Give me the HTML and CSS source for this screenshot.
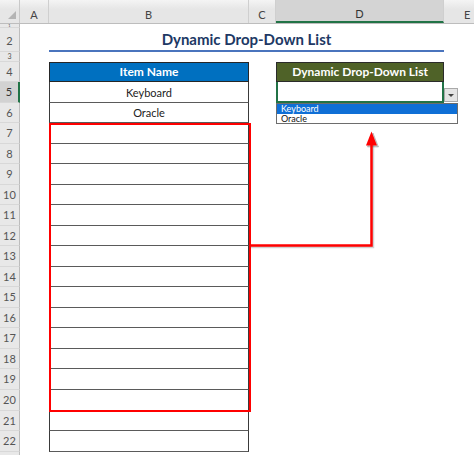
FILE: index.html
```html
<!DOCTYPE html>
<html>
<head>
<meta charset="utf-8">
<link rel="stylesheet" href="styles.css">
</head>
<body>
<div class="sheet">
  <div class="row hdr">
    <div class="corner"><span class="tri"></span></div>
    <div class="ch a">A</div>
    <div class="ch b">B</div>
    <div class="ch c">C</div>
    <div class="ch d sel">D</div>
    <div class="ch e">E</div>
  </div>
  <div class="row r1"><div class="rh">1</div></div>
  <div class="row r2"><div class="rh">2</div><div class="a"></div><div class="title">Dynamic Drop-Down List</div></div>
  <div class="row r3"><div class="rh">3</div></div>
  <div class="row"><div class="rh">4</div><div class="a"></div><div class="b th">Item Name</div><div class="c"></div><div class="d dh">Dynamic Drop-Down List</div></div>
  <div class="row"><div class="rh sel">5</div><div class="a"></div><div class="b tb">Keyboard</div><div class="c"></div><div class="d active"></div></div>
  <div class="row"><div class="rh">6</div><div class="a"></div><div class="b tb">Oracle</div></div>
  <div class="row"><div class="rh">7</div><div class="a"></div><div class="b tb"></div></div>
  <div class="row"><div class="rh">8</div><div class="a"></div><div class="b tb"></div></div>
  <div class="row"><div class="rh">9</div><div class="a"></div><div class="b tb"></div></div>
  <div class="row"><div class="rh">10</div><div class="a"></div><div class="b tb"></div></div>
  <div class="row"><div class="rh">11</div><div class="a"></div><div class="b tb"></div></div>
  <div class="row"><div class="rh">12</div><div class="a"></div><div class="b tb"></div></div>
  <div class="row"><div class="rh">13</div><div class="a"></div><div class="b tb"></div></div>
  <div class="row"><div class="rh">14</div><div class="a"></div><div class="b tb"></div></div>
  <div class="row"><div class="rh">15</div><div class="a"></div><div class="b tb"></div></div>
  <div class="row"><div class="rh">16</div><div class="a"></div><div class="b tb"></div></div>
  <div class="row"><div class="rh">17</div><div class="a"></div><div class="b tb"></div></div>
  <div class="row"><div class="rh">18</div><div class="a"></div><div class="b tb"></div></div>
  <div class="row"><div class="rh">19</div><div class="a"></div><div class="b tb"></div></div>
  <div class="row"><div class="rh">20</div><div class="a"></div><div class="b tb"></div></div>
  <div class="row"><div class="rh">21</div><div class="a"></div><div class="b tb"></div></div>
  <div class="row"><div class="rh">22</div><div class="a"></div><div class="b tb"></div></div>
  <div class="row"><div class="rh"></div></div>

  <div class="redbox"></div>
  <svg class="arrow" width="474" height="455" viewBox="0 0 474 455">
    <g class="shadow">
      <path d="M251 247 H373 V145" fill="none" stroke-width="2.5"/>
      <polygon points="373,133 367.5,147 378.5,147"/>
    </g>
    <path d="M250 245.5 H371.5 V143" fill="none" stroke="#ff0000" stroke-width="2.5"/>
    <polygon points="371.5,131.5 366,145.5 377,145.5" fill="#ff0000"/>
  </svg>

  <div class="ddbtn"><span class="caret"></span></div>
  <div class="ddlist">
    <div class="opt on">Keyboard</div>
    <div class="opt">Oracle</div>
  </div>
</div>
</body>
</html>
```
FILE: styles.css
```css
* { box-sizing: border-box; margin: 0; padding: 0; }
body { margin: 0; background: #ffffff; font-family: "Lato", "Liberation Sans", sans-serif; }

.sheet { position: relative; width: 474px; height: 455px; overflow: hidden; background: #fff; }

.row { display: flex; height: 20.54px; }
.row.hdr { height: 24px; }
.row.r1 { height: 4px; }
.row.r2 { height: 24px; }
.row.r3 { height: 9.5px; }

.a { width: 29px; flex: none; }
.b { width: 200px; flex: none; }
.c { width: 27px; flex: none; }
.d { width: 168px; flex: none; }
.e { flex: 1; }

/* column headers */
.hdr { background: linear-gradient(#f4f4f4, #e6e6e6 40%); border-bottom: 1px solid #bdbdbd; }
.corner { width: 20px; flex: none; position: relative; border-right: 1px solid #c9c9c9; }
.tri { position: absolute; right: 3px; bottom: 4px; width: 0; height: 0;
  border-left: 8px solid transparent; border-bottom: 8px solid #b4b4b4; }
.ch { display: flex; align-items: center; justify-content: center; padding-top: 6px;
  font-size: 11px; color: #444; border-right: 1px solid #cfcfcf; }
.ch.sel { background: #d4d4d4; border-bottom: 2px solid #217346; color: #333; }
.ch.e { border-right: none; justify-content: flex-start; padding-left: 20px; }

/* row headers */
.rh { width: 20px; flex: none; background: #e8e8e8; border-right: 1px solid #bdbdbd;
  border-bottom: 1px solid #d8d8d8; font-size: 11px; color: #555; text-align: center;
  line-height: 20px; overflow: hidden; }
.r1 .rh { font-size: 4px; line-height: 3px; }
.r2 .rh { line-height: 22px; padding-top: 2px; }
.r3 .rh { font-size: 7px; line-height: 8.5px; }
.rh.sel { background: #d2d2d2; border-right: 2px solid #217346; color: #333; }

/* title */
.title { width: 395px; flex: none; display: flex; align-items: flex-end; justify-content: center;
  padding-bottom: 2px; font-size: 15px; font-weight: 700; color: #203864;
  border-bottom: 2px solid #4a74bd; }

/* item table */
.th { background: #0070c0; color: #fff; font-weight: 700; font-size: 12px;
  display: flex; align-items: center; justify-content: center;
  border: 1px solid #262626; }
.tb { border-left: 1px solid #3a3a3a; border-right: 1px solid #3a3a3a; border-bottom: 1px solid #5a5a5a;
  font-size: 11px; color: #222; display: flex; align-items: center; justify-content: center;
  padding-top: 1px; }

/* dropdown area */
.dh { background: #4f6228; color: #fff; font-weight: 700; font-size: 12px;
  display: flex; align-items: center; justify-content: center; border: 1px solid #2b2b2b; }
.active { border: 2px solid #217346; border-top: none; }

.redbox { position: absolute; left: 48.5px; top: 122.5px; width: 202px; height: 289px;
  border: 2.3px solid #ff0000; }

.arrow { position: absolute; left: 0; top: 0; pointer-events: none; }
.arrow .shadow { stroke: rgba(0,0,0,0.18); fill: rgba(0,0,0,0.18); }

.ddbtn { position: absolute; left: 444px; top: 88px; width: 14px; height: 14px;
  background: #e4e4e4; border: 1px solid #a9a9a9; display: flex; align-items: center; justify-content: center; }
.caret { width: 0; height: 0; border-left: 3px solid transparent; border-right: 3px solid transparent;
  border-top: 3px solid #444; }

.ddlist { position: absolute; left: 276px; top: 103px; width: 182px; height: 21px;
  background: #fff; border: 1px solid #6d6d6d; }
.opt { height: 9.5px; line-height: 9.5px; font-size: 9px; color: #111; padding-left: 4px; }
.opt.on { background: #0f6fd6; color: #fff; }
```
